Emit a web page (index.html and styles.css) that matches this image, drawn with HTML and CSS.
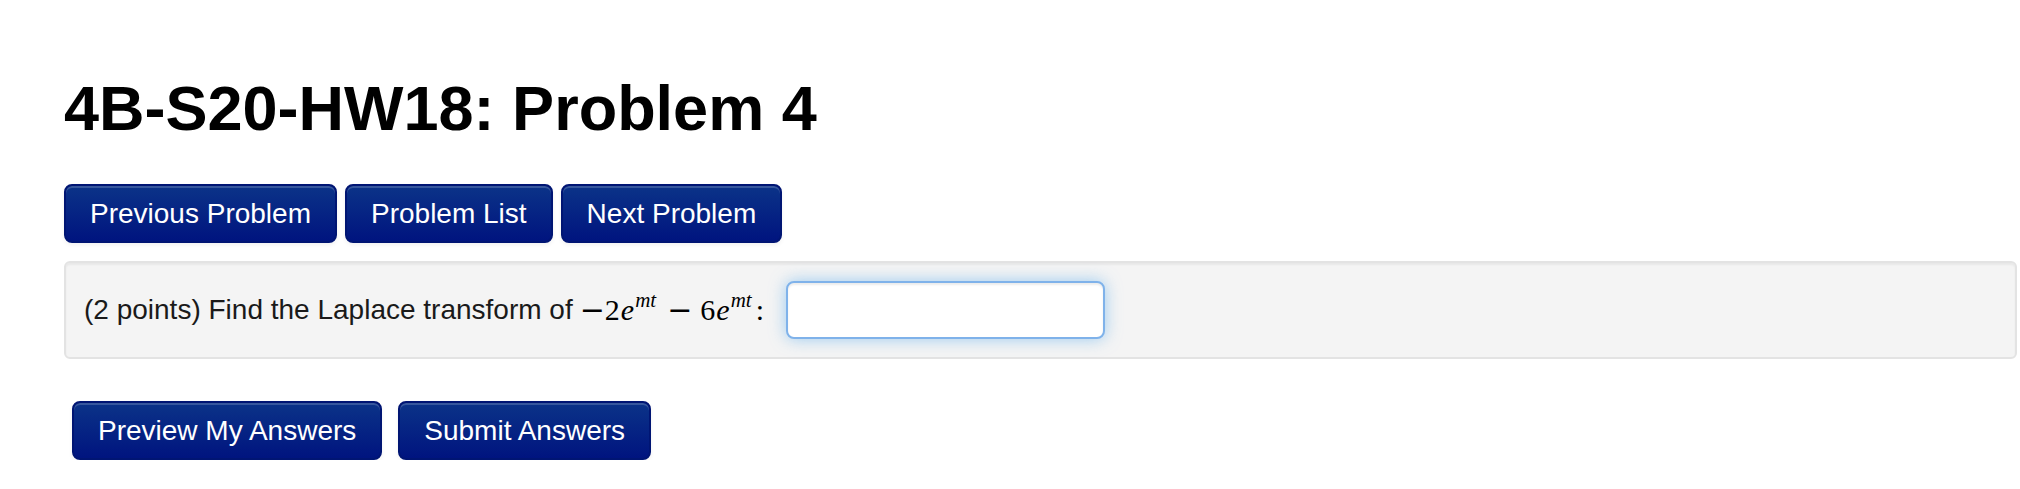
FILE: index.html
```html
<!DOCTYPE html>
<html lang="en">
<head>
<meta charset="utf-8">
<title>4B-S20-HW18: Problem 4</title>
<link rel="stylesheet" href="styles.css">
</head>
<body>
<div class="page">
  <h1 class="title">4B-S20-HW18: Problem 4</h1>
  <div class="nav">
    <a class="btn" href="#">Previous Problem</a>
    <a class="btn" href="#">Problem List</a>
    <a class="btn" href="#">Next Problem</a>
  </div>
  <div class="well">
    <span class="prompt">(2 points) Find the Laplace transform of</span>
    <span class="math"><span class="op first">&minus;</span><span class="num">2</span><span class="var">e</span><sup class="sup">mt</sup><span class="op bin">&minus;</span><span class="num">6</span><span class="var">e</span><sup class="sup">mt</sup></span>
    <span class="colon">:</span>
    <input class="answer" type="text" aria-label="answer">
  </div>
  <div class="actions">
    <button class="btn" type="button">Preview My Answers</button>
    <button class="btn" type="button">Submit Answers</button>
  </div>
</div>
</body>
</html>
```

FILE: styles.css
```css
html, body {
  margin: 0;
  padding: 0;
  background: #ffffff;
}

body {
  font-family: "Liberation Sans", Arial, sans-serif;
  color: #1a1a1a;
}

.page {
  padding: 68px 3px 0 64px;
}

.title {
  margin: 0;
  font-size: 63px;
  line-height: 80px;
  font-weight: bold;
  color: #000000;
}

.nav {
  margin-top: 36px;
  display: flex;
  gap: 8px;
}

.btn {
  display: inline-block;
  box-sizing: border-box;
  font-family: "Liberation Sans", Arial, sans-serif;
  font-size: 28px;
  line-height: 39px;
  padding: 8px 24px;
  color: #ffffff;
  text-decoration: none;
  border: 2px solid #001573;
  border-radius: 8px;
  background: linear-gradient(to bottom, #0b3388 0%, #00147f 100%);
  box-shadow: inset 0 2px 0 rgba(255, 255, 255, 0.18), 0 2px 4px rgba(0, 0, 0, 0.06);
  cursor: pointer;
  white-space: nowrap;
}

.well {
  margin-top: 18px;
  display: flex;
  align-items: center;
  padding: 18px 18px;
  background: #f4f4f4;
  border: 2px solid #e3e3e3;
  border-radius: 6px;
  box-shadow: inset 0 2px 2px rgba(0, 0, 0, 0.05);
  font-size: 28px;
  line-height: 40px;
}

.prompt {
  white-space: nowrap;
}

.math {
  font-family: "Liberation Serif", "Times New Roman", serif;
  font-size: 30px;
  line-height: 40px;
  white-space: nowrap;
  margin-left: 7px;
  color: #000;
}

.op {
  font-family: "DejaVu Serif", serif;
  font-size: 30px;
}

.op.bin {
  margin: 0 8px 0 11px;
}

.num {
  font-style: normal;
}

.var {
  font-style: italic;
  margin-left: 1px;
}

.sup {
  font-style: italic;
  font-size: 21px;
  line-height: 0;
  vertical-align: 13px;
  margin-left: 1px;
}

.colon {
  margin-left: 4px;
  font-family: "Liberation Serif", "Times New Roman", serif;
  font-size: 30px;
  color: #000;
}

.answer {
  margin-left: 22px;
  box-sizing: border-box;
  width: 319px;
  height: 58px;
  padding: 8px 12px;
  font-size: 28px;
  background: #ffffff;
  border: 2px solid #7fb2ea;
  border-radius: 8px;
  box-shadow: inset 0 2px 2px rgba(0, 0, 0, 0.075), 0 0 16px rgba(82, 168, 236, 0.55);
  outline: none;
}

.actions {
  margin-top: 42px;
  padding-left: 8px;
  display: flex;
  gap: 16px;
}
```
